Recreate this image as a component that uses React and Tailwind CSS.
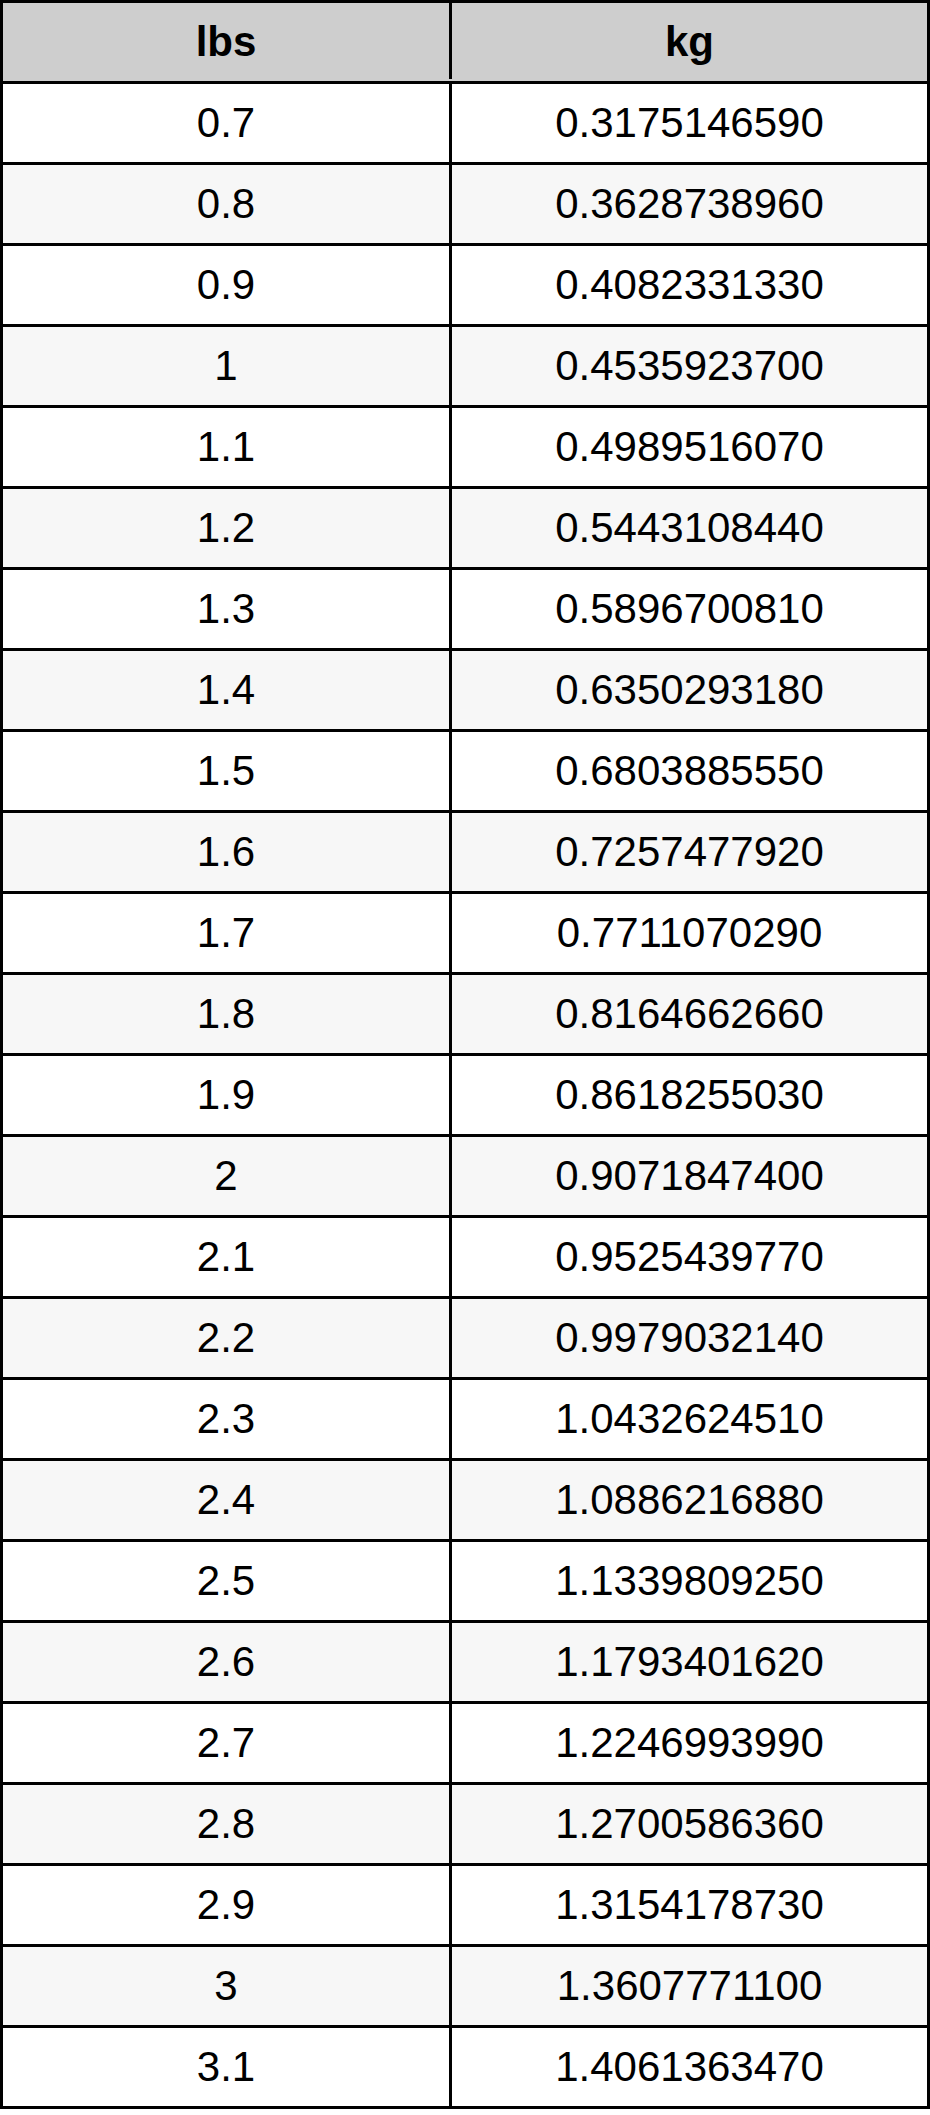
const rows = [
  ['0.7', '0.3175146590'],
  ['0.8', '0.3628738960'],
  ['0.9', '0.4082331330'],
  ['1', '0.4535923700'],
  ['1.1', '0.4989516070'],
  ['1.2', '0.5443108440'],
  ['1.3', '0.5896700810'],
  ['1.4', '0.6350293180'],
  ['1.5', '0.6803885550'],
  ['1.6', '0.7257477920'],
  ['1.7', '0.7711070290'],
  ['1.8', '0.8164662660'],
  ['1.9', '0.8618255030'],
  ['2', '0.9071847400'],
  ['2.1', '0.9525439770'],
  ['2.2', '0.9979032140'],
  ['2.3', '1.0432624510'],
  ['2.4', '1.0886216880'],
  ['2.5', '1.1339809250'],
  ['2.6', '1.1793401620'],
  ['2.7', '1.2246993990'],
  ['2.8', '1.2700586360'],
  ['2.9', '1.3154178730'],
  ['3', '1.3607771100'],
  ['3.1', '1.4061363470'],
];

export default function App() {
  return (
    <div className="w-[930px] bg-white pb-[6px] font-['Liberation_Sans',Arial,sans-serif] text-black">
      <div className="border-[3px] border-black">
        <div className="flex h-[78px] bg-[#cecece] pb-[2px] text-[42px] font-bold">
          <div className="flex w-[449px] items-center justify-center border-r-[3px] border-black">lbs</div>
          <div className="flex flex-1 items-center justify-center">kg</div>
        </div>
        {rows.map(([lbs, kg], idx) => (
          <div
            key={lbs}
            className={`flex h-[81px] border-t-[3px] border-black text-[42px] ${idx % 2 === 1 ? 'bg-[#f7f7f7]' : 'bg-white'}`}
          >
            <div className="flex w-[449px] items-center justify-center border-r-[3px] border-black pb-[2px]">{lbs}</div>
            <div className="flex flex-1 items-center justify-center pb-[2px]">{kg}</div>
          </div>
        ))}
      </div>
    </div>
  );
}
